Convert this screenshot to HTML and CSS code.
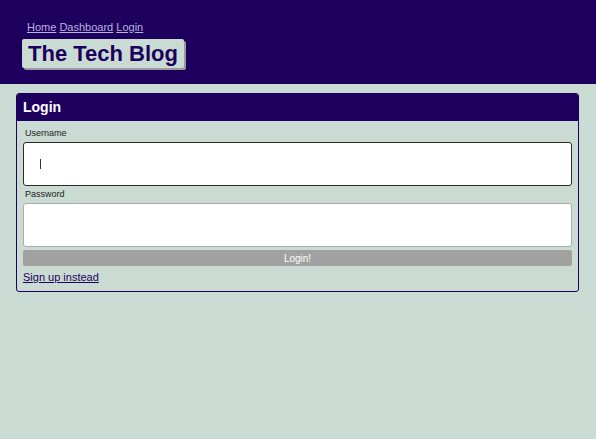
FILE: index.html
```html
<!DOCTYPE html>
<html>
<head>
<meta charset="utf-8">
<link rel="stylesheet" href="styles.css">
</head>
<body>
<header class="site-header">
  <nav class="nav">
    <a href="#">Home</a> <a href="#">Dashboard</a> <a href="#">Login</a>
  </nav>
  <h1 class="title">The Tech Blog</h1>
</header>
<main class="main">
  <section class="card">
    <div class="card-head">Login</div>
    <form class="card-body">
      <label class="label">Username</label>
      <div class="field-wrap">
        <input class="field field-focus" type="text">
        <span class="caret"></span>
      </div>
      <label class="label">Password</label>
      <input class="field" type="password">
      <button class="btn" type="button">Login!</button>
      <a class="signup" href="#">Sign up instead</a>
    </form>
  </section>
</main>
</body>
</html>
```
FILE: styles.css
```css
* { box-sizing: border-box; }
html, body { margin: 0; padding: 0; }
body {
  background: #c9dbd2;
  font-family: "Liberation Sans", Arial, sans-serif;
  height: 439px;
}
.site-header {
  background: #1d005e;
  height: 84px;
  padding: 20px 0 0 22px;
}
.nav {
  font-size: 11px;
  line-height: 14px;
  margin-left: 5px;
}
.nav a { color: #b9b6dc; }
.title {
  display: inline-block;
  margin: 5px 0 0 0;
  background: #c9dbd2;
  color: #1d005e;
  font-size: 22px;
  line-height: 29px;
  height: 29px;
  padding: 0 6px;
  border-radius: 2px;
  box-shadow: 2px 2px 0 #9a9a9a;
}
.main { padding: 9px 17px 0 16px; }
.card {
  border: 1px solid #1d005e;
  border-radius: 3px;
  overflow: hidden;
}
.card-head {
  background: #1d005e;
  color: #fff;
  font-weight: bold;
  font-size: 14px;
  height: 27px;
  line-height: 27px;
  padding-left: 6px;
}
.card-body {
  display: flex;
  flex-direction: column;
  padding: 6px 6px 8px 6px;
  margin: 0;
}
.label {
  font-size: 9px;
  line-height: 12px;
  color: #222;
  margin: 0 0 3px 2px;
}
.field-wrap { position: relative; }
.field {
  display: block;
  width: 100%;
  height: 44px;
  border: 1px solid #a9aeaa;
  border-radius: 3px;
  background: #fff;
  margin: 0 0 2px 0;
  padding: 0 16px;
}
.field-focus { border-color: #2b2b2b; }
.caret {
  position: absolute;
  left: 17px;
  top: 17px;
  width: 1px;
  height: 10px;
  background: #333;
}
.btn {
  margin-top: 1px;
  height: 16px;
  border: none;
  border-radius: 2px;
  background: #a1a1a1;
  color: #fff;
  font-family: "Liberation Sans", Arial, sans-serif;
  font-size: 10px;
  padding: 0;
}
.signup {
  margin-top: 5px;
  font-size: 11px;
  line-height: 12px;
  color: #1d005e;
  align-self: flex-start;
}
```
